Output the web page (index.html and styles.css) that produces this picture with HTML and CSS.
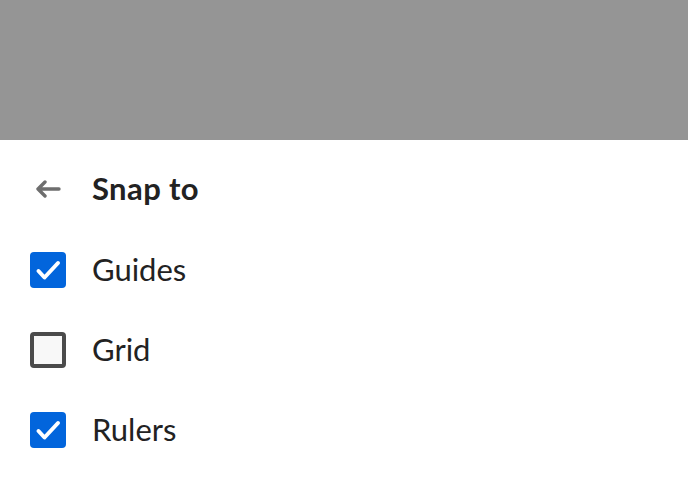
FILE: index.html
```html
<!DOCTYPE html>
<html>
<head>
<meta charset="utf-8">
<link rel="stylesheet" href="styles.css">
</head>
<body>
<div class="backdrop"></div>
<div class="panel">
  <div class="header">
    <span class="back">
      <svg width="26" height="18" viewBox="0 0 26 18"><path d="M24 9H3M10 2L3 9l7 7" fill="none" stroke="#6e6e6e" stroke-width="3.4" stroke-linecap="round" stroke-linejoin="round"/></svg>
    </span>
    <span class="title">Snap to</span>
  </div>
  <div class="list">
    <label class="row"><span class="box checked"><svg width="36" height="36" viewBox="0 0 36 36"><path d="M8.5 19l6 6.5L28 11" fill="none" stroke="#fff" stroke-width="4" stroke-linecap="round" stroke-linejoin="round"/></svg></span><span class="label">Guides</span></label>
    <label class="row"><span class="box"></span><span class="label">Grid</span></label>
    <label class="row"><span class="box checked"><svg width="36" height="36" viewBox="0 0 36 36"><path d="M8.5 19l6 6.5L28 11" fill="none" stroke="#fff" stroke-width="4" stroke-linecap="round" stroke-linejoin="round"/></svg></span><span class="label">Rulers</span></label>
  </div>
</div>
</body>
</html>
```
FILE: styles.css
```css
html, body { margin: 0; padding: 0; background: #fff; }
body { width: 688px; height: 480px; overflow: hidden; font-family: Lato, "Open Sans", sans-serif; color: #222; }
.backdrop { height: 140px; background: #959595; }
.panel { padding-top: 9px; }
.header { height: 80px; display: flex; align-items: center; padding-left: 35px; }
.back { width: 26px; height: 18px; display: flex; }
.title { margin-left: 31px; font-size: 31px; font-weight: 700; letter-spacing: 0.4px; margin-bottom: 2px; }
.list { margin-top: 1px; }
.row { height: 80px; display: flex; align-items: center; padding-left: 30px; }
.box { width: 36px; height: 36px; box-sizing: border-box; border: 4px solid #4b4b4b; border-radius: 4px; background: #f8f8f8; display: flex; }
.box.checked { border: none; background: #0265dc; }
.label { margin-left: 26px; font-size: 31px; margin-bottom: 3px; }
```
